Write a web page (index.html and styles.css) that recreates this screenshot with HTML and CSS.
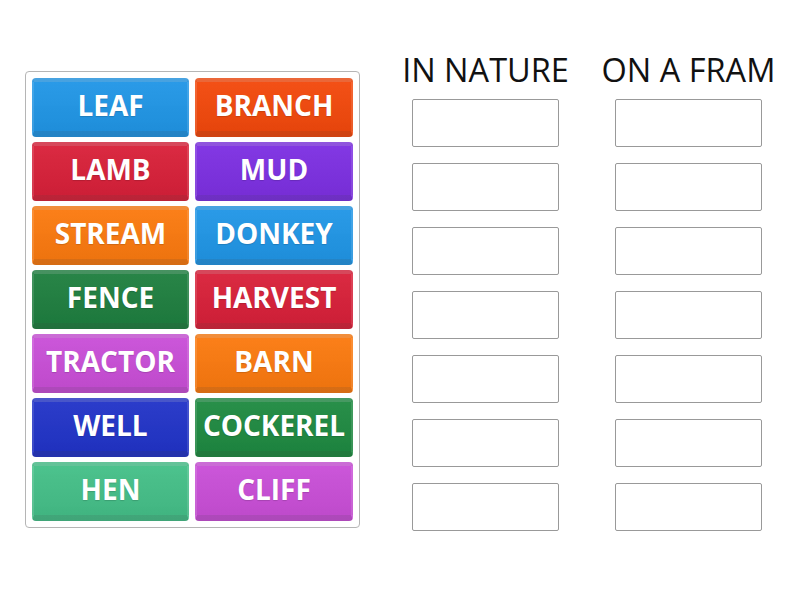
FILE: index.html
```html
<!DOCTYPE html>
<html>
<head>
<meta charset="utf-8">
<link rel="stylesheet" href="styles.css">
</head>
<body>
<div class="page">
  <div class="bank">
    <div class="tile blue">LEAF</div>
    <div class="tile redorange">BRANCH</div>
    <div class="tile red">LAMB</div>
    <div class="tile purple">MUD</div>
    <div class="tile orange">STREAM</div>
    <div class="tile blue">DONKEY</div>
    <div class="tile green">FENCE</div>
    <div class="tile red">HARVEST</div>
    <div class="tile pink">TRACTOR</div>
    <div class="tile orange">BARN</div>
    <div class="tile navy">WELL</div>
    <div class="tile green2">COCKEREL</div>
    <div class="tile mint">HEN</div>
    <div class="tile pink">CLIFF</div>
  </div>
  <div class="groups">
    <div class="group">
      <div class="title">IN NATURE</div>
      <div class="slot"></div><div class="slot"></div><div class="slot"></div><div class="slot"></div><div class="slot"></div><div class="slot"></div><div class="slot"></div>
    </div>
    <div class="group">
      <div class="title">ON A FRAM</div>
      <div class="slot"></div><div class="slot"></div><div class="slot"></div><div class="slot"></div><div class="slot"></div><div class="slot"></div><div class="slot"></div>
    </div>
  </div>
</div>
</body>
</html>
```

FILE: styles.css
```css
html, body {
  margin: 0;
  padding: 0;
  background: #fff;
}
body {
  font-family: "Open Sans", "Noto Sans", sans-serif;
}
.page {
  display: flex;
  align-items: flex-start;
  width: 800px;
  height: 600px;
}
.bank {
  margin-left: 25px;
  margin-top: 71px;
  border: 1px solid #b5b5b5;
  border-radius: 4px;
  padding: 6px;
  display: grid;
  grid-template-columns: 157px 158px;
  grid-auto-rows: 59px;
  column-gap: 6px;
  row-gap: 5px;
}
.tile {
  box-sizing: border-box;
  border-radius: 4px;
  border-style: solid;
  border-width: 4px 2px 6px 2px;
  border-color: rgba(255,255,255,0.18) rgba(255,255,255,0.12) rgba(0,0,0,0.14) rgba(255,255,255,0.12);
  background-clip: border-box;
  color: #fff;
  font-weight: 700;
  font-size: 28px;
  display: flex;
  align-items: center;
  justify-content: center;
  padding-bottom: 3px;
  white-space: nowrap;
  text-shadow: 0 1px 1px rgba(0,0,0,0.15);
  background-image: linear-gradient(rgba(255,255,255,0.04), rgba(0,0,0,0.05));
}
.blue { background-color: #2196e6; }
.redorange { background-color: #f2490d; }
.red { background-color: #d8213a; }
.purple { background-color: #7d30e2; }
.orange { background-color: #fb7a10; }
.green { background-color: #1f7f40; }
.green2 { background-color: #1f8a42; }
.pink { background-color: #c94fd7; }
.navy { background-color: #2234c8; }
.mint { background-color: #45bf88; }

.groups {
  display: flex;
  margin-left: 40px;
  margin-top: 50px;
  gap: 32px;
}
.group {
  width: 171px;
  display: flex;
  flex-direction: column;
  align-items: center;
}
.title {
  font-size: 32.5px;
  line-height: 40px;
  color: #111;
  white-space: nowrap;
  margin-bottom: 9px;
}
.slot {
  box-sizing: border-box;
  width: 147px;
  height: 48px;
  border: 1px solid #999;
  border-radius: 2px;
  margin-bottom: 16px;
}
```
